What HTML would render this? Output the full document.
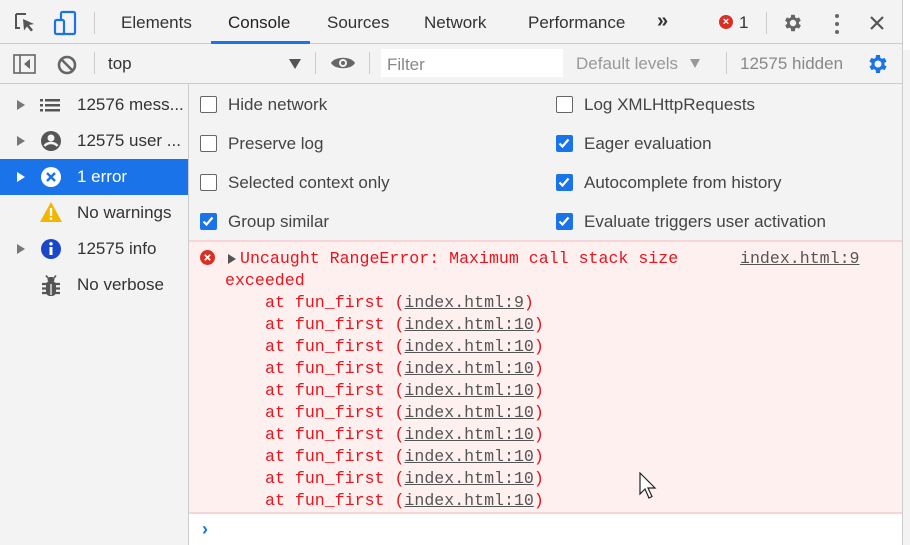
<!DOCTYPE html>
<html><head><style>
*{box-sizing:border-box;margin:0;padding:0}
body{width:910px;height:545px;overflow:hidden;background:#fff;font-family:"Liberation Sans",sans-serif;color:#333;position:relative}
.abs{position:absolute}
.tb1{left:0;top:0;width:902px;height:44px;background:#f3f3f3;border-bottom:1px solid #ccc}
.tb2{left:0;top:44px;width:902px;height:40px;background:#f3f3f3;border-bottom:1px solid #ccc}
.t{position:absolute;font-size:17px;color:#333}
.sb{left:0;top:84px;width:189px;height:461px;background:#f3f3f3;border-right:1px solid #ccc}
.si{position:absolute;left:0;width:188px;height:36px;font-size:17px;line-height:36px}
.si .lbl{position:absolute;left:77px}
.tri{position:absolute;left:17px;top:13px;width:0;height:0;border-left:8px solid #777;border-top:5px solid transparent;border-bottom:5px solid transparent}
.set{left:189px;top:84px;width:713px;height:158px;background:#f3f3f3;border-bottom:2px solid #f5d5d8}
.cb{position:absolute;font-size:17px;line-height:20px;color:#444}
.cb i{position:absolute;left:-28px;top:1px;width:17px;height:17px;border:1.5px solid #666;border-radius:2px;background:#fff}
.cb i.on{background:#1a73e8;border-color:#1a73e8}
.err{left:189px;top:242px;width:713px;height:272px;background:#fff0f0;border-bottom:2px solid #f7d5d8}
.mono{font-family:"Liberation Mono",monospace;font-size:16.6px;color:#e8141e;position:absolute;line-height:22px;white-space:pre}
.u{text-decoration:underline;color:#555}
.sep{position:absolute;width:1px;background:#ccc}
</style></head><body>
<div class="abs tb1"></div>
<div class="abs tb2"></div>
<svg class="abs" style="left:14px;top:12px" width="24" height="22" viewBox="0 0 24 22"><path d="M2 2h10M2 2v14h4" stroke="#555" stroke-width="2" fill="none"/><path d="M9 7l11 5-5 1 4 5-2 1.5-4-5-3 4z" fill="#555"/></svg>
<svg class="abs" style="left:53px;top:10px" width="24" height="26"><rect x="8" y="2" width="14" height="22" rx="1.5" fill="none" stroke="#1a73e8" stroke-width="2.2"/><rect x="2" y="10" width="9" height="14" rx="1.5" fill="#f3f3f3" stroke="#1a73e8" stroke-width="2.2"/></svg>
<div class="sep" style="left:94px;top:12px;height:22px"></div>
<div class="t" style="left:121px;top:13px">Elements</div>
<div class="t" style="left:228px;top:13px;color:#222">Console</div>
<div class="abs" style="left:211px;top:41px;width:99px;height:3px;background:#1a73e8"></div>
<div class="t" style="left:327px;top:13px">Sources</div>
<div class="t" style="left:424px;top:13px">Network</div>
<div class="t" style="left:528px;top:13px">Performance</div>
<div class="t" style="left:657px;top:10px;font-size:20px;font-weight:bold">»</div>
<div class="abs" style="left:719px;top:15px;width:14px;height:14px;border-radius:50%;background:#d93025;color:#fff;font-size:11px;line-height:14px;text-align:center;font-weight:bold">×</div>
<div class="t" style="left:739px;top:13px">1</div>
<div class="sep" style="left:766px;top:12px;height:22px"></div>
<svg class="abs" style="left:782px;top:12px" width="22" height="22" viewBox="0 0 24 24"><path fill="#666" d="M19.4 13a7.5 7.5 0 000-2l2.1-1.6-2-3.5-2.5 1a7 7 0 00-1.7-1L15 3h-4l-.4 2.9a7 7 0 00-1.7 1l-2.5-1-2 3.5L6.6 11a7.5 7.5 0 000 2l-2.1 1.6 2 3.5 2.5-1a7 7 0 001.7 1L11 21h4l.4-2.9a7 7 0 001.7-1l2.5 1 2-3.5zM13 15.5A3.5 3.5 0 1113 8.5a3.5 3.5 0 010 7z" transform="translate(-1 0)"/></svg>
<svg class="abs" style="left:833px;top:13px" width="8" height="22"><circle cx="4" cy="3" r="2" fill="#666"/><circle cx="4" cy="11" r="2" fill="#666"/><circle cx="4" cy="19" r="2" fill="#666"/></svg>
<svg class="abs" style="left:869px;top:15px" width="16" height="16"><path d="M2 2l12 12M14 2L2 14" stroke="#555" stroke-width="2.2"/></svg>
<svg class="abs" style="left:13px;top:54px" width="24" height="20"><rect x="1" y="1" width="21" height="18" fill="none" stroke="#666" stroke-width="1.6"/><line x1="7" y1="1" x2="7" y2="19" stroke="#666" stroke-width="1.6"/><path d="M17 5v10l-6-5z" fill="#666"/></svg>
<svg class="abs" style="left:56px;top:54px" width="22" height="22"><circle cx="11" cy="11" r="8" fill="none" stroke="#666" stroke-width="2.6"/><path d="M5.5 5.5l11 11" stroke="#666" stroke-width="2.6"/></svg>
<div class="sep" style="left:94px;top:52px;height:22px"></div>
<div class="t" style="left:108px;top:54px">top</div>
<div class="abs" style="left:289px;top:59px;border-top:10px solid #555;border-left:6px solid transparent;border-right:6px solid transparent"></div>
<div class="sep" style="left:315px;top:52px;height:22px"></div>
<svg class="abs" style="left:330px;top:54px" width="26" height="18"><path d="M1 9C5 2 21 2 25 9 21 16 5 16 1 9z" fill="#666"/><circle cx="13" cy="9" r="4" fill="#f3f3f3"/><circle cx="13" cy="9" r="2" fill="#666"/></svg>
<div class="sep" style="left:369px;top:52px;height:22px"></div>
<div class="abs" style="left:381px;top:49px;width:182px;height:28px;background:#fff"></div>
<div class="t" style="left:387px;top:55px;color:#888">Filter</div>
<div class="t" style="left:576px;top:54px;color:#999">Default levels</div>
<div class="abs" style="left:690px;top:59px;border-top:9px solid #999;border-left:5px solid transparent;border-right:5px solid transparent"></div>
<div class="sep" style="left:726px;top:52px;height:22px"></div>
<div class="t" style="left:740px;top:54px;color:#888">12575 hidden</div>
<svg class="abs" style="left:866px;top:52px" width="24" height="24" viewBox="0 0 24 24"><path fill="#1a73e8" d="M19.4 13a7.5 7.5 0 000-2l2.1-1.6-2-3.5-2.5 1a7 7 0 00-1.7-1L15 3h-4l-.4 2.9a7 7 0 00-1.7 1l-2.5-1-2 3.5L6.6 11a7.5 7.5 0 000 2l-2.1 1.6 2 3.5 2.5-1a7 7 0 001.7 1L11 21h4l.4-2.9a7 7 0 001.7-1l2.5 1 2-3.5zM13 15.5A3.5 3.5 0 1113 8.5a3.5 3.5 0 010 7z" transform="translate(-1 0)"/></svg>
<div class="abs" style="left:902px;top:0;width:1px;height:545px;background:#ccc"></div>
<div class="abs" style="left:903px;top:50px;width:7px;height:495px;background:#f3f3f3"></div>
<div class="abs sb">
 <div class="si" style="top:3px"><span class="tri"></span><svg class="abs" style="left:40px;top:11px" width="20" height="14"><g fill="#555"><rect x="0" y="1" width="3" height="2.5"/><rect x="5" y="1" width="15" height="2.5"/><rect x="0" y="6" width="3" height="2.5"/><rect x="5" y="6" width="15" height="2.5"/><rect x="0" y="11" width="3" height="2.5"/><rect x="5" y="11" width="15" height="2.5"/></g></svg><span class="lbl">12576 mess...</span></div>
 <div class="si" style="top:39px"><span class="tri"></span><svg class="abs" style="left:40px;top:7px" width="22" height="22"><circle cx="11" cy="11" r="10" fill="#555"/><circle cx="11" cy="8" r="3.5" fill="#f3f3f3"/><path d="M4.5 16c3-4 10-4 13 0" stroke="#f3f3f3" stroke-width="2.6" fill="none"/></svg><span class="lbl">12575 user ...</span></div>
 <div class="si" style="top:75px;background:#1a73e8;color:#fff"><span class="tri" style="border-left-color:#fff"></span><svg class="abs" style="left:40px;top:7px" width="22" height="22"><circle cx="11" cy="11" r="10" fill="#fff"/><path d="M7 7l8 8M15 7l-8 8" stroke="#1a73e8" stroke-width="2.4"/></svg><span class="lbl">1 error</span></div>
 <div class="si" style="top:111px"><svg class="abs" style="left:39px;top:6px" width="24" height="22"><path d="M12 1L23 21H1z" fill="#f2b600"/><rect x="10.8" y="7" width="2.4" height="8" fill="#fff"/><rect x="10.8" y="16.5" width="2.4" height="2.4" fill="#fff"/></svg><span class="lbl">No warnings</span></div>
 <div class="si" style="top:147px"><span class="tri"></span><svg class="abs" style="left:40px;top:7px" width="22" height="22"><circle cx="11" cy="11" r="10" fill="#1a47c8"/><rect x="9.5" y="9" width="3" height="8" fill="#fff"/><circle cx="11" cy="5.8" r="1.7" fill="#fff"/></svg><span class="lbl">12575 info</span></div>
 <div class="si" style="top:183px"><svg class="abs" style="left:40px;top:8px" width="22" height="22"><path d="M2 9h18M2 13.5h18M2 18h18" stroke="#555" stroke-width="2.2"/><rect x="6" y="6" width="10" height="15" rx="4" fill="#555"/><rect x="7.5" y="2" width="7" height="5" rx="2.5" fill="#555"/><path d="M8 3L6 0.5M14 3l2-2.5" stroke="#555" stroke-width="1.6"/><line x1="11" y1="9" x2="11" y2="20" stroke="#f3f3f3" stroke-width="1.3"/></svg><span class="lbl">No verbose</span></div>
</div>
<div class="abs set"></div>
<div class="cb" style="left:228px;top:95px"><i></i>Hide network</div>
<div class="cb" style="left:228px;top:134px"><i></i>Preserve log</div>
<div class="cb" style="left:228px;top:173px"><i></i>Selected context only</div>
<div class="cb" style="left:228px;top:212px"><i class="on"><svg width="14" height="14" style="position:absolute;left:0;top:0"><path d="M2.5 7.5l3 3 6-7" stroke="#fff" stroke-width="2.2" fill="none"/></svg></i>Group similar</div>
<div class="cb" style="left:584px;top:95px"><i></i>Log XMLHttpRequests</div>
<div class="cb" style="left:584px;top:134px"><i class="on"><svg width="14" height="14" style="position:absolute;left:0;top:0"><path d="M2.5 7.5l3 3 6-7" stroke="#fff" stroke-width="2.2" fill="none"/></svg></i>Eager evaluation</div>
<div class="cb" style="left:584px;top:173px"><i class="on"><svg width="14" height="14" style="position:absolute;left:0;top:0"><path d="M2.5 7.5l3 3 6-7" stroke="#fff" stroke-width="2.2" fill="none"/></svg></i>Autocomplete from history</div>
<div class="cb" style="left:584px;top:212px"><i class="on"><svg width="14" height="14" style="position:absolute;left:0;top:0"><path d="M2.5 7.5l3 3 6-7" stroke="#fff" stroke-width="2.2" fill="none"/></svg></i>Evaluate triggers user activation</div>
<div class="abs err"></div>
<svg class="abs" style="left:200px;top:250px" width="15" height="15"><circle cx="7.5" cy="7.5" r="7.5" fill="#d93025"/><path d="M4.8 4.8l5.4 5.4M10.2 4.8l-5.4 5.4" stroke="#fff" stroke-width="1.8"/></svg>
<div class="abs" style="left:228px;top:254px;border-left:8px solid #555;border-top:5px solid transparent;border-bottom:5px solid transparent"></div>
<div class="mono" style="left:240px;top:248px">Uncaught RangeError: Maximum call stack size</div>
<div class="mono u" style="left:740px;top:248px;color:#555">index.html:9</div>
<div class="mono" style="left:225px;top:270px">exceeded</div>
<div class="mono" style="left:265px;top:292px">at fun_first (<span class="u">index.html:9</span>)
at fun_first (<span class="u">index.html:10</span>)
at fun_first (<span class="u">index.html:10</span>)
at fun_first (<span class="u">index.html:10</span>)
at fun_first (<span class="u">index.html:10</span>)
at fun_first (<span class="u">index.html:10</span>)
at fun_first (<span class="u">index.html:10</span>)
at fun_first (<span class="u">index.html:10</span>)
at fun_first (<span class="u">index.html:10</span>)
at fun_first (<span class="u">index.html:10</span>)</div>
<svg class="abs" style="left:639px;top:472px" width="20" height="28"><path d="M1 1v21l5-5 4 9 3-1.5-4-8.5h7z" fill="#fff" stroke="#222" stroke-width="1.2"/></svg>
<div class="abs" style="left:202px;top:519px;color:#1a73e8;font-size:18px;font-weight:bold">›</div>
</body></html>
